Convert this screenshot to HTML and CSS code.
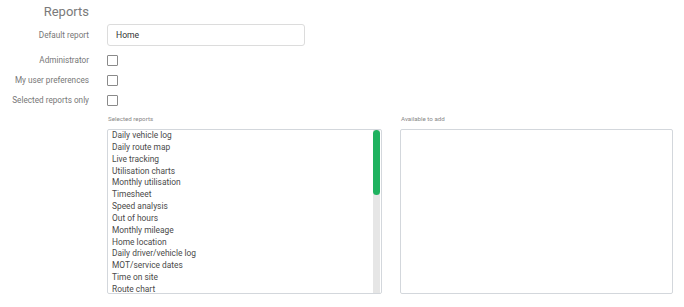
FILE: index.html
```html
<!DOCTYPE html>
<html lang="en">
<head>
    <meta charset="UTF-8">
    <meta name="viewport" content="width=device-width, initial-scale=1.0">
    <title>Reports</title>
    <link rel="stylesheet" href="styles.css">
</head>
<body>
    <div class="settings">
        <div class="row heading-row">
            <h2 class="heading">Reports</h2>
        </div>
        <div class="row input-row">
            <label class="label" for="default-report">Default report</label>
            <input class="text-input" id="default-report" type="text" value="Home">
        </div>
        <div class="row check-row">
            <label class="label" for="admin">Administrator</label>
            <input class="checkbox" id="admin" type="checkbox">
        </div>
        <div class="row check-row">
            <label class="label" for="prefs">My user preferences</label>
            <input class="checkbox" id="prefs" type="checkbox">
        </div>
        <div class="row check-row">
            <label class="label" for="selected-only">Selected reports only</label>
            <input class="checkbox" id="selected-only" type="checkbox">
        </div>

        <div class="lists">
            <div class="list-col left-col">
                <div class="list-title">Selected reports</div>
                <div class="list-box">
                    <ul class="items">
                        <li>Daily vehicle log</li>
                        <li>Daily route map</li>
                        <li>Live tracking</li>
                        <li>Utilisation charts</li>
                        <li>Monthly utilisation</li>
                        <li>Timesheet</li>
                        <li>Speed analysis</li>
                        <li>Out of hours</li>
                        <li>Monthly mileage</li>
                        <li>Home location</li>
                        <li>Daily driver/vehicle log</li>
                        <li>MOT/service dates</li>
                        <li>Time on site</li>
                        <li>Route chart</li>
                    </ul>
                    <div class="scroll-track">
                        <div class="scroll-thumb"></div>
                    </div>
                </div>
            </div>
            <div class="list-col right-col">
                <div class="list-title">Available to add</div>
                <div class="list-box"></div>
            </div>
        </div>
    </div>
</body>
</html>
```

FILE: styles.css
```css
* {
    margin: 0;
    padding: 0;
    box-sizing: border-box;
    font-family: Roboto, Arial, sans-serif;
}

body {
    background-color: #fff;
    color: #555;
}

.settings {
    padding-top: 2px;
}

.row {
    display: grid;
    grid-template-columns: 89px auto;
    column-gap: 18px;
    align-items: center;
}

.heading-row {
    height: 18px;
}

.heading {
    font-size: 13px;
    font-weight: 400;
    color: #7a7a7a;
    text-align: right;
}

.label {
    font-size: 8.2px;
    color: #777;
    text-align: right;
}

.input-row {
    margin-top: 4px;
    height: 22px;
}

.text-input {
    width: 198px;
    height: 22px;
    border: 1px solid #dcdcdc;
    border-radius: 3px;
    padding: 0 8px;
    font-size: 8.6px;
    color: #333;
    outline: none;
}

.input-row + .check-row {
    margin-top: 4px;
}

.check-row {
    height: 20px;
}

.checkbox {
    appearance: none;
    width: 11px;
    height: 11px;
    border: 1px solid #8a8a8a;
    border-radius: 1px;
    background-color: #fff;
}

.lists {
    display: flex;
    gap: 18px;
    margin-left: 107px;
    margin-top: 5px;
}

.left-col {
    width: 275px;
}

.right-col {
    width: 273px;
}

.list-title {
    font-size: 6.2px;
    color: #888;
    height: 9px;
    padding-left: 1px;
    margin-bottom: 5px;
}

.list-box {
    display: flex;
    height: 165px;
    border: 1px solid #d3d7dc;
    border-radius: 2px;
    overflow: hidden;
}

.items {
    flex: 1;
    list-style: none;
    padding-left: 4px;
}

.items li {
    font-size: 8.4px;
    line-height: 11.85px;
    color: #4a4a4a;
    white-space: nowrap;
}

.scroll-track {
    width: 7px;
    margin-right: 1px;
    background-color: #e6e6e6;
}

.scroll-thumb {
    height: 65px;
    background-color: #1fb25f;
    border-radius: 4px;
}
```
